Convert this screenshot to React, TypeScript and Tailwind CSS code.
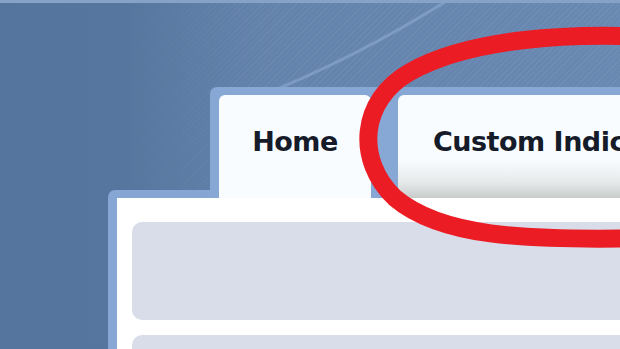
import React from 'react';

const tabFont = { fontFamily: '"DejaVu Sans", Verdana, sans-serif' };

const RedCircle = () => (
  <svg className="pointer-events-none absolute inset-0 z-20" width="620" height="349" viewBox="0 0 620 349">
    <path
      d="M 650 37 C 570 33, 470 38, 410 72 C 360 100, 355 160, 395 198 C 440 236, 520 241, 650 238"
      fill="none"
      stroke="#ec1c24"
      strokeWidth="18"
      strokeLinecap="round"
    />
  </svg>
);

const Streak = () => (
  <svg className="pointer-events-none absolute inset-0 z-0" width="620" height="349" viewBox="0 0 620 349">
    <path d="M 240 104 Q 350 62 448 0" fill="none" stroke="#9fbbe0" strokeOpacity="0.4" strokeWidth="3" />
  </svg>
);

export default function App() {
  return (
    <div className="relative h-[349px] w-[620px] overflow-hidden bg-[linear-gradient(90deg,#55759f_0%,#56769f_20%,#6383ad_42%,#6989b3_100%)]">
      <div className="pointer-events-none absolute inset-0 bg-[repeating-linear-gradient(135deg,rgba(255,255,255,0.05)_0px,rgba(255,255,255,0.05)_1px,transparent_1px,transparent_4px)] [mask-image:linear-gradient(90deg,transparent_18%,black_45%)]" />
      <Streak />
      <div className="relative z-10 flex flex-col">
        <div className="h-[3px] bg-[#87a2c7]" />

        <div className="relative z-10 ml-[210px] mt-[84px] flex rounded-tl-[7px] bg-[#87a7d4] pl-[9px] pt-[8px]">
          <div
            className="flex h-[103px] w-[152px] shrink-0 justify-center rounded-t-[6px] bg-[#f8fcff] pt-[31px] text-[27px] leading-[32px] font-bold tracking-[-0.5px] text-[#161b29]"
            style={tabFont}
          >
            Home
          </div>
          <div
            className="ml-[27px] h-[103px] w-[320px] shrink-0 rounded-tl-[6px] bg-[linear-gradient(180deg,#f8fcff_0%,#f8fcff_64%,#e6eaea_84%,#c8cdcc_100%)] pl-[35px] pt-[31px] text-[27px] leading-[32px] font-bold tracking-[-0.5px] whitespace-nowrap text-[#161b29]"
            style={tabFont}
          >
            Custom Indicators
          </div>
        </div>

        <div className="-mt-[8px] ml-[108px] rounded-tl-[7px] bg-[#86a6d3] pl-[9px] pt-[8px]">
          <div className="flex flex-col gap-[15px] bg-white pl-[15px] pt-[24px]">
            <div className="h-[98px] w-[600px] rounded-[10px] bg-[#d9dde9]" />
            <div className="h-[98px] w-[600px] rounded-[10px] bg-[#d9dde9]" />
          </div>
        </div>
      </div>
      <RedCircle />
    </div>
  );
}
